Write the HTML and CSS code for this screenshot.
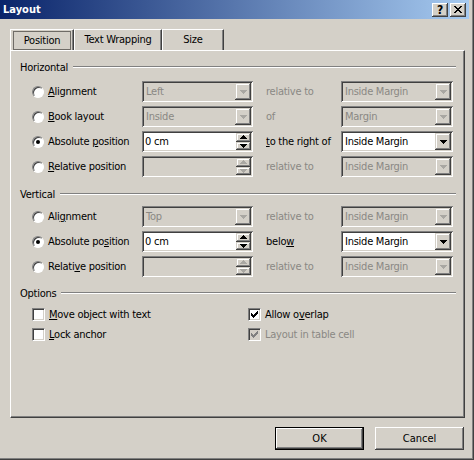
FILE: index.html
```html
<!DOCTYPE html>
<html lang="en">
<head>
    <meta charset="UTF-8">
    <title>Layout</title>
    <link rel="stylesheet" href="styles.css">
</head>
<body>
    <div class="window">
        <div class="titlebar">
            <span class="title">Layout</span>
            <div class="caption-buttons">
                <span class="cap-btn">?</span>
                <span class="cap-btn">
                    <svg width="8" height="7" viewBox="0 0 8 7"><path d="M0 0h2v1H0z M6 0h2v1H6z M1 1h2v1H1z M5 1h2v1H5z M2 2h4v1H2z M3 3h2v1H3z M2 4h4v1H2z M1 5h2v1H1z M5 5h2v1H5z M0 6h2v1H0z M6 6h2v1H6z"/></svg>
                </span>
            </div>
        </div>

        <div class="content">
            <div class="tabs">
                <div class="tab active"><span>Position</span></div>
                <div class="tab wide">Text Wrapping</div>
                <div class="tab">Size</div>
            </div>

            <div class="panel">
                <div class="group-title"><span>Horizontal</span><i></i></div>
                <div class="rows">
                    <div class="row">
                        <label class="opt"><span class="radio"></span><span><u>A</u>lignment</span></label>
                        <div class="combo disabled"><span class="value">Left</span><span class="drop"><svg width="7" height="4"><path d="M0 0h7v1H0z M1 1h5v1H1z M2 2h3v1H2z M3 3h1v1H3z"/></svg></span></div>
                        <span class="rel disabled">relative to</span>
                        <div class="combo disabled"><span class="value">Inside Margin</span><span class="drop"><svg width="7" height="4"><path d="M0 0h7v1H0z M1 1h5v1H1z M2 2h3v1H2z M3 3h1v1H3z"/></svg></span></div>
                    </div>
                    <div class="row">
                        <label class="opt"><span class="radio"></span><span><u>B</u>ook layout</span></label>
                        <div class="combo disabled"><span class="value">Inside</span><span class="drop"><svg width="7" height="4"><path d="M0 0h7v1H0z M1 1h5v1H1z M2 2h3v1H2z M3 3h1v1H3z"/></svg></span></div>
                        <span class="rel disabled">of</span>
                        <div class="combo disabled"><span class="value">Margin</span><span class="drop"><svg width="7" height="4"><path d="M0 0h7v1H0z M1 1h5v1H1z M2 2h3v1H2z M3 3h1v1H3z"/></svg></span></div>
                    </div>
                    <div class="row">
                        <label class="opt"><span class="radio checked"></span><span>Absolute <u>p</u>osition</span></label>
                        <div class="combo spin"><span class="value">0 cm</span><span class="spin-btns"><span class="sbtn"><svg width="7" height="4"><path d="M3 0h1v1H3z M2 1h3v1H2z M1 2h5v1H1z M0 3h7v1H0z"/></svg></span><span class="sbtn"><svg width="7" height="4"><path d="M0 0h7v1H0z M1 1h5v1H1z M2 2h3v1H2z M3 3h1v1H3z"/></svg></span></span></div>
                        <span class="rel"><u>t</u>o the right of</span>
                        <div class="combo"><span class="value">Inside Margin</span><span class="drop"><svg width="7" height="4"><path d="M0 0h7v1H0z M1 1h5v1H1z M2 2h3v1H2z M3 3h1v1H3z"/></svg></span></div>
                    </div>
                    <div class="row">
                        <label class="opt"><span class="radio"></span><span><u>R</u>elative position</span></label>
                        <div class="combo spin disabled"><span class="value"></span><span class="spin-btns"><span class="sbtn"><svg width="7" height="4"><path d="M3 0h1v1H3z M2 1h3v1H2z M1 2h5v1H1z M0 3h7v1H0z"/></svg></span><span class="sbtn"><svg width="7" height="4"><path d="M0 0h7v1H0z M1 1h5v1H1z M2 2h3v1H2z M3 3h1v1H3z"/></svg></span></span></div>
                        <span class="rel disabled">relative to</span>
                        <div class="combo disabled"><span class="value">Inside Margin</span><span class="drop"><svg width="7" height="4"><path d="M0 0h7v1H0z M1 1h5v1H1z M2 2h3v1H2z M3 3h1v1H3z"/></svg></span></div>
                    </div>
                </div>

                <div class="group-title"><span>Vertical</span><i></i></div>
                <div class="rows vertical">
                    <div class="row">
                        <label class="opt"><span class="radio"></span><span>Ali<u>g</u>nment</span></label>
                        <div class="combo disabled"><span class="value">Top</span><span class="drop"><svg width="7" height="4"><path d="M0 0h7v1H0z M1 1h5v1H1z M2 2h3v1H2z M3 3h1v1H3z"/></svg></span></div>
                        <span class="rel disabled">relative to</span>
                        <div class="combo disabled"><span class="value">Inside Margin</span><span class="drop"><svg width="7" height="4"><path d="M0 0h7v1H0z M1 1h5v1H1z M2 2h3v1H2z M3 3h1v1H3z"/></svg></span></div>
                    </div>
                    <div class="row">
                        <label class="opt"><span class="radio checked"></span><span>Absolute po<u>s</u>ition</span></label>
                        <div class="combo spin"><span class="value">0 cm</span><span class="spin-btns"><span class="sbtn"><svg width="7" height="4"><path d="M3 0h1v1H3z M2 1h3v1H2z M1 2h5v1H1z M0 3h7v1H0z"/></svg></span><span class="sbtn"><svg width="7" height="4"><path d="M0 0h7v1H0z M1 1h5v1H1z M2 2h3v1H2z M3 3h1v1H3z"/></svg></span></span></div>
                        <span class="rel">belo<u>w</u></span>
                        <div class="combo"><span class="value">Inside Margin</span><span class="drop"><svg width="7" height="4"><path d="M0 0h7v1H0z M1 1h5v1H1z M2 2h3v1H2z M3 3h1v1H3z"/></svg></span></div>
                    </div>
                    <div class="row">
                        <label class="opt"><span class="radio"></span><span>Relati<u>v</u>e position</span></label>
                        <div class="combo spin disabled"><span class="value"></span><span class="spin-btns"><span class="sbtn"><svg width="7" height="4"><path d="M3 0h1v1H3z M2 1h3v1H2z M1 2h5v1H1z M0 3h7v1H0z"/></svg></span><span class="sbtn"><svg width="7" height="4"><path d="M0 0h7v1H0z M1 1h5v1H1z M2 2h3v1H2z M3 3h1v1H3z"/></svg></span></span></div>
                        <span class="rel disabled">relative to</span>
                        <div class="combo disabled"><span class="value">Inside Margin</span><span class="drop"><svg width="7" height="4"><path d="M0 0h7v1H0z M1 1h5v1H1z M2 2h3v1H2z M3 3h1v1H3z"/></svg></span></div>
                    </div>
                </div>

                <div class="group-title"><span>Options</span><i></i></div>
                <div class="options">
                    <label class="opt"><span class="check"></span><span><u>M</u>ove object with text</span></label>
                    <label class="opt"><span class="check"><svg width="7" height="7"><path d="M6 0h1v1H6z M5 1h2v1H5z M0 2h1v1H0z M4 2h3v1H4z M0 3h2v1H0z M3 3h3v1H3z M0 4h5v1H0z M1 5h3v1H1z M2 6h1v1H2z"/></svg></span><span>Allow o<u>v</u>erlap</span></label>
                    <label class="opt"><span class="check"></span><span><u>L</u>ock anchor</span></label>
                    <label class="opt disabled"><span class="check"><svg width="7" height="7"><path d="M6 0h1v1H6z M5 1h2v1H5z M0 2h1v1H0z M4 2h3v1H4z M0 3h2v1H0z M3 3h3v1H3z M0 4h5v1H0z M1 5h3v1H1z M2 6h1v1H2z"/></svg></span><span>Layout in table cell</span></label>
                </div>
            </div>

            <div class="actions">
                <button class="default">OK</button>
                <button>Cancel</button>
            </div>
        </div>
    </div>
</body>
</html>
```

FILE: styles.css
```css
:root {
    --face: #d4d0c8;
    --shadow: #808080;
    --dark: #404040;
    --light: #ffffff;
    --gray-text: #8a8884;
}

* {
    margin: 0;
    padding: 0;
    box-sizing: border-box;
}

body {
    width: 474px;
    height: 460px;
    overflow: hidden;
    background-color: var(--face);
    font-family: "DejaVu Sans Condensed", "DejaVu Sans", sans-serif;
    font-stretch: condensed;
    font-size: 11px;
    letter-spacing: -0.25px;
    color: #000;
}

u {
    text-decoration: underline;
    text-underline-offset: 1px;
}

.window {
    height: 460px;
    box-shadow: inset -1px -1px var(--dark), inset -2px -2px var(--shadow);
}

/* title bar */
.titlebar {
    width: 469px;
    height: 19px;
    background: linear-gradient(to right, #0a246a, #a6caf0);
    display: flex;
    align-items: center;
    justify-content: space-between;
    padding: 0 3px 0 3px;
}

.title {
    color: #fff;
    font-weight: bold;
    letter-spacing: 0;
}

.caption-buttons {
    display: flex;
    gap: 2px;
}

.cap-btn {
    width: 16px;
    height: 14px;
    background-color: var(--face);
    box-shadow: inset -1px -1px var(--dark), inset 1px 1px var(--light), inset -2px -2px var(--shadow);
    display: flex;
    align-items: center;
    justify-content: center;
    font-weight: bold;
    font-size: 12px;
    line-height: 1;
}

/* main area */
.content {
    padding: 10px 9px 0 10px;
}

.tabs {
    display: flex;
    height: 21px;
}

.tab {
    width: 62px;
    height: 21px;
    border-top: 1px solid var(--light);
    border-left: 1px solid var(--light);
    border-right: 1px solid var(--dark);
    box-shadow: inset -1px 0 var(--shadow);
    display: flex;
    align-items: center;
    justify-content: center;
    padding-bottom: 1px;
}

.tab.active {
    width: 64px;
    padding: 1px 2px 0 2px;
}

.tab.active span {
    flex: 1;
    height: 19px;
    border: 1px solid #6e6b66;
    display: flex;
    align-items: center;
    justify-content: center;
}

.tab.wide {
    width: 88px;
}

.panel {
    height: 368px;
    border-top: 1px solid var(--light);
    border-left: 1px solid var(--light);
    border-right: 1px solid var(--dark);
    border-bottom: 1px solid var(--dark);
    box-shadow: inset -1px -1px var(--shadow);
    padding: 9px 8px 0 9px;
}

.group-title {
    display: flex;
    align-items: center;
    gap: 5px;
    height: 14px;
}

.group-title i {
    flex: 1;
    height: 2px;
    border-top: 1px solid var(--shadow);
    border-bottom: 1px solid var(--light);
}

.rows {
    margin: 5px 0 8px 12px;
}

.rows.vertical {
    margin: 3px 0 7px 12px;
}

.row {
    display: grid;
    grid-template-columns: 110px 111px 88px 112px;
    align-items: center;
    height: 25px;
}

.opt {
    display: flex;
    align-items: center;
    gap: 4px;
    white-space: nowrap;
}

.radio {
    width: 12px;
    height: 12px;
    border-radius: 50%;
    background-color: #fff;
    border: 1px solid;
    border-color: var(--shadow) var(--light) var(--light) var(--shadow);
    box-shadow: inset 1px 1px var(--dark);
    display: flex;
    align-items: center;
    justify-content: center;
}

.radio.checked::after {
    content: "";
    width: 4px;
    height: 4px;
    border-radius: 50%;
    background-color: #000;
}

.check {
    width: 13px;
    height: 13px;
    background-color: #fff;
    border: 1px solid;
    border-color: var(--shadow) var(--light) var(--light) var(--shadow);
    box-shadow: inset 1px 1px var(--dark), inset -1px -1px var(--face);
    display: flex;
    align-items: center;
    justify-content: center;
}

.check svg {
    fill: #000;
}

.opt.disabled {
    color: var(--gray-text);
}

.opt.disabled .check {
    background-color: var(--face);
}

.opt.disabled .check svg {
    fill: var(--shadow);
}

/* combo boxes and spinners */
.combo {
    height: 21px;
    display: flex;
    align-items: stretch;
    background-color: #fff;
    padding: 2px;
    box-shadow: inset 1px 1px var(--shadow), inset -1px -1px var(--light), inset 2px 2px var(--dark), inset -2px -2px var(--face);
}

.combo.disabled {
    background-color: var(--face);
    color: var(--gray-text);
}

.combo .value {
    flex: 1;
    display: flex;
    align-items: center;
    padding-left: 2px;
    overflow: hidden;
    white-space: nowrap;
}

.combo.spin .value {
    padding-left: 1px;
}

.drop {
    width: 16px;
    background-color: var(--face);
    box-shadow: inset -1px -1px var(--dark), inset 1px 1px var(--face), inset -2px -2px var(--shadow), inset 2px 2px var(--light);
    display: flex;
    align-items: center;
    justify-content: center;
}

.drop svg,
.sbtn svg {
    fill: #000;
}

.combo.disabled .drop svg,
.combo.disabled .sbtn svg {
    fill: #a9a7a2;
}

.spin-btns {
    width: 15px;
    display: flex;
    flex-direction: column;
}

.sbtn {
    flex: 1;
    background-color: var(--face);
    box-shadow: inset -1px -1px var(--dark), inset 1px 1px var(--face), inset -2px -2px var(--shadow), inset 2px 2px var(--light);
    display: flex;
    align-items: center;
    justify-content: center;
}

.rel {
    padding-left: 13px;
    white-space: nowrap;
}

.rel.disabled {
    color: var(--gray-text);
}

.options {
    margin: 4px 0 0 12px;
    display: grid;
    grid-template-columns: 216px 1fr;
    grid-auto-rows: 20px;
    align-items: center;
}

/* dialog buttons */
.actions {
    display: flex;
    justify-content: flex-end;
    gap: 11px;
    margin-top: 9px;
    padding-right: 1px;
}

button {
    width: 89px;
    height: 23px;
    border: none;
    background-color: var(--face);
    font: inherit;
    color: #000;
    box-shadow: inset -1px -1px var(--dark), inset 1px 1px var(--light), inset -2px -2px var(--shadow);
}

button.default {
    border: 1px solid #000;
}
```
